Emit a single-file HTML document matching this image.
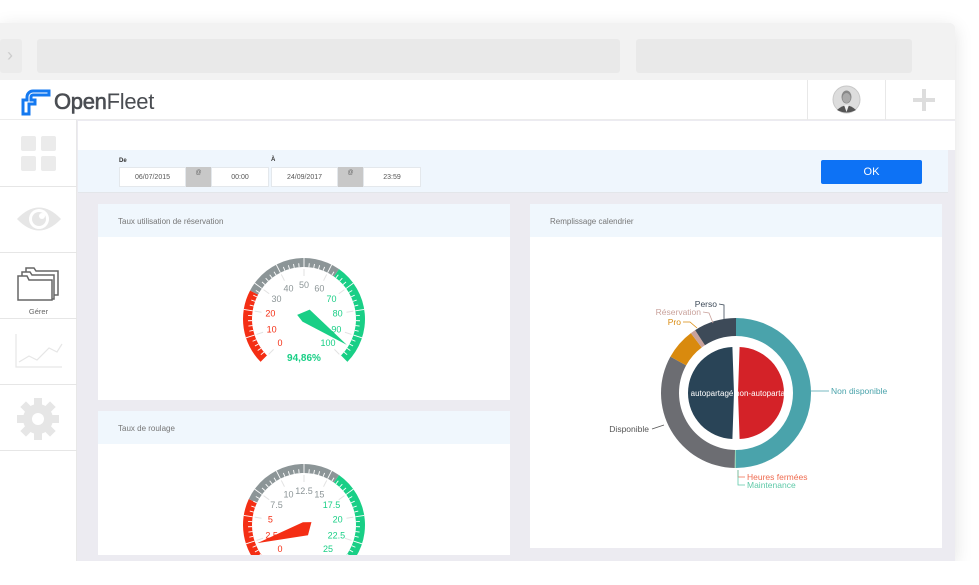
<!DOCTYPE html>
<html><head><meta charset="utf-8">
<style>
*{box-sizing:border-box;margin:0;padding:0}
body{width:979px;height:585px;background:#fff;font-family:"Liberation Sans",sans-serif;position:relative;overflow:hidden}
.abs{position:absolute}
.win{left:0;top:23px;width:955px;height:538px;background:#ecebf1;box-shadow:0 4px 18px rgba(0,0,0,.12);overflow:hidden;border-radius:0 6px 0 0}
.tb{left:0;top:0;width:955px;height:57px;background:#f2f2f2}
.hdr{left:0;top:57px;width:955px;height:40px;background:#fff;border-bottom:1px solid #ececec}
.side{left:0;top:97px;width:77px;height:441px;background:#fff;border-right:1px solid #e8e8e8}
.sep{left:0;width:77px;height:1px;background:#e6e6e6}
.card{background:#fff}
.ch{height:33px;background:#f0f7fd;font-size:8px;color:#777;padding:13px 0 0 20px}
.inp{background:#fff;border:1px solid #e4e8ec;height:20px;font-size:7px;color:#555;text-align:center;line-height:19px}
.at{background:#c8c8c8;height:20px;font-size:6px;color:#666;text-align:center;line-height:12px}
</style></head><body>
<div class="abs win">
 <div class="abs tb">
  <div class="abs" style="left:0;top:16px;width:22px;height:34px;background:#ebebeb;border-radius:3px"></div>
  <div class="abs" style="left:7px;top:22px;color:#ccc;font-size:18px">›</div>
  <div class="abs" style="left:37px;top:16px;width:583px;height:34px;background:#e9e9e9;border-radius:3px"></div>
  <div class="abs" style="left:636px;top:16px;width:276px;height:34px;background:#e9e9e9;border-radius:3px"></div>
 </div>
 <div class="abs hdr">
  <svg class="abs" style="left:19px;top:8px" width="32" height="28" viewBox="0 0 32 28"><path d="M30 3H14a6 6 0 0 0-6 6v3H4v14h6V16h6v-4h-4V9a2 2 0 0 1 2-2h16z" fill="none" stroke="#1479f0" stroke-width="3"/></svg>
  <div class="abs" style="left:54px;top:9px;font-size:22px;color:#4a4d52;letter-spacing:-.3px"><b style="font-weight:normal;-webkit-text-stroke:.6px #4a4d52">Open</b>Fleet</div>
  <div class="abs" style="left:807px;top:0;width:1px;height:40px;background:#e8e8e8"></div>
  <div class="abs" style="left:885px;top:0;width:1px;height:40px;background:#e8e8e8"></div>
  <svg class="abs" style="left:832px;top:5px" width="29" height="29" viewBox="0 0 29 29"><circle cx="14.5" cy="14.5" r="13.5" fill="#ddd" stroke="#c8c8c8"/><ellipse cx="14.5" cy="12" rx="5" ry="6.5" fill="#888"/><ellipse cx="14.5" cy="13" rx="4" ry="5" fill="#aaa"/><path d="M5 25Q14.5 16 24 25Q14.5 30 5 25z" fill="#555"/><path d="M12 20L14.5 27L17 20z" fill="#eee"/></svg>
  <div class="abs" style="left:913px;top:18px;width:22px;height:4px;background:#ddd"></div>
  <div class="abs" style="left:922px;top:9px;width:4px;height:22px;background:#ddd"></div>
 </div>
 <div class="abs side">
  <div class="abs" style="left:21px;top:16px;width:15px;height:15px;background:#ebebeb;border-radius:2px"></div>
  <div class="abs" style="left:41px;top:16px;width:15px;height:15px;background:#ebebeb;border-radius:2px"></div>
  <div class="abs" style="left:21px;top:36px;width:15px;height:15px;background:#ebebeb;border-radius:2px"></div>
  <div class="abs" style="left:41px;top:36px;width:15px;height:15px;background:#ebebeb;border-radius:2px"></div>
  <div class="abs sep" style="top:66px"></div>
  <svg class="abs" style="left:15px;top:84px" width="48" height="30" viewBox="0 0 48 30"><path d="M2 15Q24-8 46 15Q24 38 2 15z" fill="#e6e6e6"/><circle cx="24" cy="15" r="10" fill="#fff"/><circle cx="24" cy="15" r="7" fill="#e6e6e6"/><circle cx="27" cy="12" r="3" fill="#fff"/></svg>
  <div class="abs sep" style="top:132px"></div>
  <svg class="abs" style="left:16px;top:146px" width="46" height="36" viewBox="0 0 46 36"><g fill="#fff" stroke="#666" stroke-width="1.5"><path d="M10 2h8l2 3h22v24H10z"/><path d="M6 6h8l2 3h22v24H6z"/><path d="M2 10h9l2 4h23v20H2z"/></g></svg>
  <div class="abs" style="left:0;top:187px;width:77px;text-align:center;font-size:7.5px;color:#666">Gérer</div>
  <div class="abs sep" style="top:198px"></div>
  <svg class="abs" style="left:15px;top:214px" width="48" height="34" viewBox="0 0 48 34"><path d="M1 0V33H47M4 28l10-6 8 4 12-12 8 4 5-8" fill="none" stroke="#e6e6e6" stroke-width="1.2"/></svg>
  <div class="abs sep" style="top:264px"></div>
  <svg class="abs" style="left:16px;top:277px" width="44" height="44" viewBox="-22 -22 44 44"><g fill="#e6e6e6"><circle r="15"/><g id="t"><rect x="-4" y="-21" width="8" height="8"/></g><use href="#t" transform="rotate(45)"/><use href="#t" transform="rotate(90)"/><use href="#t" transform="rotate(135)"/><use href="#t" transform="rotate(180)"/><use href="#t" transform="rotate(225)"/><use href="#t" transform="rotate(270)"/><use href="#t" transform="rotate(315)"/></g><circle r="6" fill="#fff"/></svg>
  <div class="abs sep" style="top:330px"></div>
 </div>
 <div class="abs" style="left:78px;top:98px;width:877px;height:29px;background:#fff"></div>
 <div class="abs" style="left:78px;top:127px;width:870px;height:43px;background:#eff6fd;border-bottom:1px solid #e3e6ea">
  <div class="abs" style="left:41px;top:8px;font-size:6px;color:#333;font-weight:bold">De</div>
  <div class="abs" style="left:193px;top:7px;font-size:6px;color:#333;font-weight:bold">À</div>
  <div class="abs inp" style="left:41px;top:17px;width:67px">06/07/2015</div>
  <div class="abs at" style="left:108px;top:17px;width:25px">@</div>
  <div class="abs inp" style="left:133px;top:17px;width:58px">00:00</div>
  <div class="abs inp" style="left:193px;top:17px;width:67px">24/09/2017</div>
  <div class="abs at" style="left:260px;top:17px;width:25px">@</div>
  <div class="abs inp" style="left:285px;top:17px;width:58px">23:59</div>
  <div class="abs" style="left:743px;top:10px;width:101px;height:24px;background:#0d72f5;border-radius:2px;color:#fff;font-size:11px;text-align:center;line-height:24px">OK</div>
 </div>
 <div class="abs card" style="left:98px;top:181px;width:412px;height:196px"><div class="ch">Taux utilisation de réservation</div></div>
 <div class="abs card" style="left:98px;top:388px;width:412px;height:160px"><div class="ch">Taux de roulage</div></div>
 <div class="abs card" style="left:530px;top:181px;width:412px;height:344px"><div class="ch">Remplissage calendrier</div></div>
</div>
<svg id="g" class="abs" style="left:0;top:0" width="979" height="585" font-family="Liberation Sans, sans-serif"></svg>
<div class="abs" style="left:78px;top:555px;width:877px;height:6px;background:#ecebf1"></div>
<div class="abs" style="left:0;top:561px;width:979px;height:24px;background:#fff"></div>
<script>
var s=document.getElementById('g'),h='';
function P(cx,cy,r,a){a=(a-90)*Math.PI/180;return[cx+r*Math.cos(a),cy+r*Math.sin(a)];}
function arc(cx,cy,r1,r2,a1,a2,c){var p1=P(cx,cy,r1,a1),p2=P(cx,cy,r1,a2),p3=P(cx,cy,r2,a2),p4=P(cx,cy,r2,a1),l=(a2-a1)>180?1:0;
return '<path d="M'+p1+'A'+r1+' '+r1+' 0 '+l+' 1 '+p2+'L'+p3+'A'+r2+' '+r2+' 0 '+l+' 0 '+p4+'z" fill="'+c+'"/>';}
function gauge(cx,cy,max,val,labels,redEnd,grnStart,vtxt){
 var A=function(v){return -135+270*v/max;};
 h+=arc(cx,cy,61,52,A(0),A(redEnd),'#f42e14');
 h+=arc(cx,cy,61,52,A(redEnd),A(grnStart),'#8c9597');
 h+=arc(cx,cy,61,52,A(grnStart),A(max),'#19cf86');
 for(var i=0;i<=50;i++){var a=-135+270*i/50,p=P(cx,cy,52,a),q=P(cx,cy,(i%5?56:61),a);h+='<line x1="'+p[0]+'" y1="'+p[1]+'" x2="'+q[0]+'" y2="'+q[1]+'" stroke="#fff" stroke-width="0.9"/>';}
 labels.forEach(function(v){var a=A(v),p=P(cx,cy,50,a),q=P(cx,cy,43,a);h+='<line x1="'+p[0]+'" y1="'+p[1]+'" x2="'+q[0]+'" y2="'+q[1]+'" stroke="#e2e2e2" stroke-width="1"/>';
  var t=P(cx,cy,34,a),c=v<redEnd?'#f42e14':(v<grnStart?'#8c9597':'#19cf86');h+='<text x="'+t[0]+'" y="'+(t[1]+3)+'" font-size="9" fill="'+c+'" text-anchor="middle">'+v+'</text>';});
 var a=A(val),tip=P(cx,cy,50,a),b1=P(cx,cy,11,a-90),b2=P(cx,cy,3,a+90),c2=P(cx,cy,-8,a);
 var col=val>grnStart?'#19cf86':'#f42e14';
 h+='<path d="M'+tip+'L'+b1+'L'+c2+'L'+b2+'z" fill="'+col+'"/>';
 if(vtxt)h+='<text x="'+cx+'" y="'+(cy+42)+'" font-size="10" fill="#19cf86" text-anchor="middle" font-weight="bold">'+vtxt+'</text>';
}
gauge(304,319,100,94.86,[0,10,20,30,40,50,60,70,80,90,100],27,63,'94,86%');
gauge(304,525,25,2.2,[0,2.5,5,7.5,10,12.5,15,17.5,20,22.5,25],6.5,15.75,null);
var cx=736,cy=393;
h+=arc(cx,cy,75,57,0,180,'#4aa3ab');
h+=arc(cx,cy,75,57,180,181,'#8fd3b8');
h+=arc(cx,cy,75,57,181,299,'#6c6d72');
h+=arc(cx,cy,75,57,299,323,'#d98a0e');
h+=arc(cx,cy,75,57,323,327,'#c9a29c');
h+=arc(cx,cy,75,57,327,360,'#3d4a58');
h+=arc(cx+2,cy,46,0.01,2,178,'#d42228');
h+=arc(cx-2,cy,46,0.01,182,358,'#294457');
h+='<text x="712" y="396" font-size="8" fill="#fff" text-anchor="middle">autopartagé</text><text x="760" y="396" font-size="8" fill="#fff" text-anchor="middle">non-autoparta</text>';
function lab(x,y,t,c,anc,pts){h+='<polyline points="'+pts+'" fill="none" stroke="'+c+'" stroke-width="0.8"/><text x="'+x+'" y="'+y+'" font-size="8.5" fill="'+c+'" text-anchor="'+anc+'">'+t+'</text>';}
lab(831,394,'Non disponible','#4aa3ab','start','810,391 829,391');
lab(649,432,'Disponible','#555','end','652,429 664,425');
lab(717,307,'Perso','#3d4a58','end','719,304 724,305 724,320');
lab(701,315,'Réservation','#c9a29c','end','703,312 709,313 713,323');
lab(681,325,'Pro','#d98a0e','end','683,322 690,322 697,328');
lab(747,480,'Heures fermées','#ef6b4f','start','738,470 738,477 745,477');
lab(747,488,'Maintenance','#5ec9a8','start','738,470 738,485 745,485');
s.innerHTML=h;
</script>
</body></html>
